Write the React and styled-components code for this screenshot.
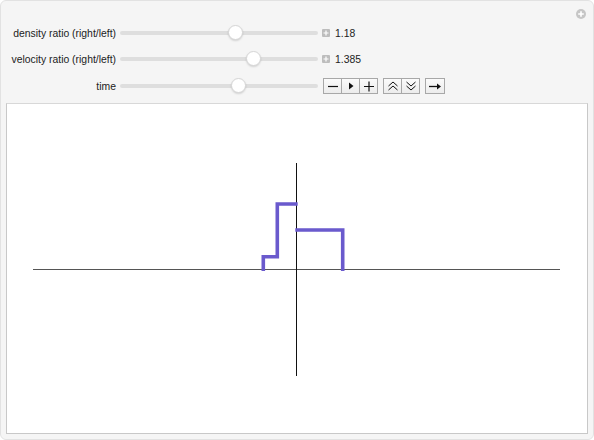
import React from "react";
import styled, { createGlobalStyle } from "styled-components";

const GlobalStyle = createGlobalStyle`
  html, body {
    margin: 0;
    padding: 0;
    background: #ffffff;
  }
  body {
    font-family: "Liberation Sans", Arial, sans-serif;
  }
`;

const controls = [
  { label: "density ratio (right/left)", value: 0.591, readout: "1.18" },
  { label: "velocity ratio (right/left)", value: 0.691, readout: "1.385" },
  { label: "time", value: 0.608, animator: true },
];

const THUMB = 15;
const TRACK = 198;

const MinusIcon = () => (
  <svg width="12" height="12" viewBox="0 0 12 12">
    <path d="M1 6.5h10" stroke="#111" strokeWidth="1.2" />
  </svg>
);

const PlayIcon = () => (
  <svg width="12" height="12" viewBox="0 0 12 12">
    <path d="M4 2.5 L8.5 6 L4 9.5 Z" fill="#111" />
  </svg>
);

const PlusIcon = () => (
  <svg width="12" height="12" viewBox="0 0 12 12">
    <path d="M1 6.5h10M6 1.5v10" stroke="#111" strokeWidth="1.2" />
  </svg>
);

const FasterIcon = () => (
  <svg width="12" height="12" viewBox="0 0 12 12">
    <path d="M1.5 6 L6 2 L10.5 6 M1.5 10 L6 6 L10.5 10" stroke="#111" strokeWidth="1" fill="none" />
  </svg>
);

const SlowerIcon = () => (
  <svg width="12" height="12" viewBox="0 0 12 12">
    <path d="M1.5 2 L6 6 L10.5 2 M1.5 6 L6 10 L10.5 6" stroke="#111" strokeWidth="1" fill="none" />
  </svg>
);

const DirectionIcon = () => (
  <svg width="14" height="12" viewBox="0 0 14 12">
    <path d="M1 6.5h10" stroke="#111" strokeWidth="1.3" />
    <path d="M9 3.5 L13 6.5 L9 9.5 Z" fill="#111" />
  </svg>
);

const Slider = ({ value }) => (
  <Track>
    <Thumb style={{ left: value * (TRACK - THUMB) }} />
  </Track>
);

const Animator = () => (
  <ButtonBar>
    <ButtonGroup>
      <ControlButton><MinusIcon /></ControlButton>
      <ControlButton><PlayIcon /></ControlButton>
      <ControlButton><PlusIcon /></ControlButton>
    </ButtonGroup>
    <ButtonGroup>
      <ControlButton><FasterIcon /></ControlButton>
      <ControlButton><SlowerIcon /></ControlButton>
    </ButtonGroup>
    <ButtonGroup>
      <ControlButton $wide><DirectionIcon /></ControlButton>
    </ButtonGroup>
  </ButtonBar>
);

const Chart = () => (
  <svg width="580" height="329" viewBox="0 0 580 329">
    <line x1="26" y1="165.5" x2="553" y2="165.5" stroke="#555" strokeWidth="1" />
    <line x1="289.5" y1="59" x2="289.5" y2="272" stroke="#111" strokeWidth="1" />
    <polyline
      points="256.3,167 256.3,152.7 270.3,152.7 270.3,100 290.7,100"
      fill="none"
      stroke="#6a5acd"
      strokeWidth="3.6"
    />
    <polyline
      points="288.3,126 335.7,126 335.7,167"
      fill="none"
      stroke="#6a5acd"
      strokeWidth="3.6"
    />
  </svg>
);

export default function App() {
  return (
    <>
      <GlobalStyle />
      <Panel>
        <CloseBadge>
          <svg width="10" height="10" viewBox="0 0 10 10">
            <circle cx="5" cy="5" r="5" fill="#c6c6c6" />
            <path d="M5 2.2v5.6M2.2 5h5.6" stroke="#fff" strokeWidth="1.6" />
          </svg>
        </CloseBadge>
        <Controls>
          {controls.map((c) => (
            <Row key={c.label}>
              <Label>{c.label}</Label>
              <Slider value={c.value} />
              {c.animator ? (
                <Animator />
              ) : (
                <Readout>
                  <PlusBox>
                    <svg width="8" height="8" viewBox="0 0 8 8">
                      <path d="M4 1.5v5M1.5 4h5" stroke="#fff" strokeWidth="1.2" />
                    </svg>
                  </PlusBox>
                  <span>{c.readout}</span>
                </Readout>
              )}
            </Row>
          ))}
        </Controls>
        <PlotArea>
          <Chart />
        </PlotArea>
      </Panel>
    </>
  );
}

const Panel = styled.div`
  position: relative;
  box-sizing: border-box;
  width: 594px;
  height: 440px;
  background: #f5f5f5;
  border: 1px solid #e2e2e2;
  border-radius: 6px;
  padding: 19px 5px 5px 5px;
  display: flex;
  flex-direction: column;
`;

const CloseBadge = styled.div`
  position: absolute;
  top: 8px;
  right: 7px;
  width: 10px;
  height: 10px;
  display: flex;
`;

const Controls = styled.div`
  display: flex;
  flex-direction: column;
`;

const Row = styled.div`
  box-sizing: border-box;
  display: grid;
  grid-template-columns: 110px ${TRACK}px auto;
  column-gap: 4px;
  align-items: center;
  height: 26px;
  &:last-child {
    height: 27px;
    padding-top: 1px;
  }
`;

const Label = styled.div`
  text-align: right;
  font-size: 10.4px;
  color: #222;
  white-space: nowrap;
`;

const Track = styled.div`
  position: relative;
  height: 4px;
  border-radius: 2px;
  background: #dedede;
`;

const Thumb = styled.div`
  position: absolute;
  top: -6px;
  width: ${THUMB}px;
  height: ${THUMB}px;
  border-radius: 50%;
  box-sizing: border-box;
  background: #ffffff;
  border: 1px solid #d6d6d6;
  box-shadow: 0 1px 2px rgba(0, 0, 0, 0.15);
`;

const Readout = styled.div`
  display: flex;
  align-items: center;
  gap: 5px;
  font-size: 10.4px;
  color: #222;
`;

const PlusBox = styled.div`
  width: 8px;
  height: 8px;
  border-radius: 1px;
  background: #bdbdbd;
  display: flex;
`;

const ButtonBar = styled.div`
  display: flex;
  gap: 5px;
  margin-left: 1px;
`;

const ButtonGroup = styled.div`
  display: flex;
`;

const ControlButton = styled.button`
  box-sizing: border-box;
  width: ${(p) => (p.$wide ? "20px" : "19px")};
  height: 16px;
  padding: 0;
  margin: 0;
  margin-left: -1px;
  &:first-child {
    margin-left: 0;
  }
  border: 1px solid #a8a8a8;
  border-radius: 0;
  background: linear-gradient(#fbfbfb, #ececec);
  display: flex;
  align-items: center;
  justify-content: center;
`;

const PlotArea = styled.div`
  margin-top: 4px;
  flex: 1;
  box-sizing: border-box;
  background: #ffffff;
  border: 1px solid #c8c8c8;
  border-top-color: #d8d8d8;
  display: flex;
  overflow: hidden;
`;
